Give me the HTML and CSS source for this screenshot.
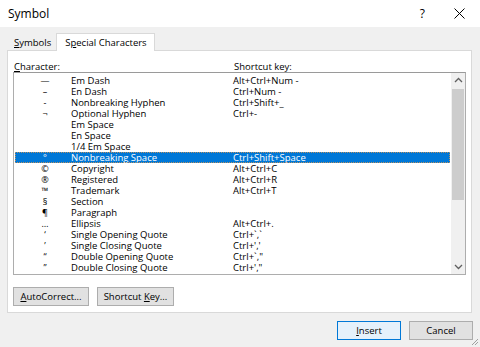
FILE: index.html
```html
<!DOCTYPE html>
<html lang="en">
<head>
    <meta charset="UTF-8">
    <title>Symbol</title>
    <link rel="stylesheet" href="styles.css">
</head>
<body>
    <div class="dialog">
        <!-- Pasek tytułu -->
        <header class="titlebar">
            <span class="title">Symbol</span>
            <span class="help">?</span>
            <span class="close">
                <svg width="11" height="11" viewBox="0 0 11 11">
                    <path d="M0.5 0.5 L10.5 10.5 M10.5 0.5 L0.5 10.5" stroke="#000" stroke-width="1" fill="none"/>
                </svg>
            </span>
        </header>

        <!-- Zakładki -->
        <nav class="tabs">
            <span class="tab"><u>S</u>ymbols</span>
            <span class="tab active">S<u>p</u>ecial Characters</span>
        </nav>

        <section class="panel">
            <div class="list-head">
                <span class="head-char"><u>C</u>haracter:</span>
                <span class="head-key">Shortcut key:</span>
            </div>

            <div class="listbox">
                <div class="rows" id="rows"></div>
                <div class="scrollbar">
                    <span class="arrow">
                        <svg width="9" height="6" viewBox="0 0 9 6"><path d="M1 5 L4.5 1.5 L8 5" stroke="#606060" stroke-width="1.3" fill="none"/></svg>
                    </span>
                    <div class="track"><div class="thumb"></div></div>
                    <span class="arrow">
                        <svg width="9" height="6" viewBox="0 0 9 6"><path d="M1 1 L4.5 4.5 L8 1" stroke="#606060" stroke-width="1.3" fill="none"/></svg>
                    </span>
                </div>
            </div>

            <div class="panel-buttons">
                <button class="btn btn-autocorrect"><u>A</u>utoCorrect...</button>
                <button class="btn btn-shortcut">Shortcut <u>K</u>ey...</button>
            </div>
        </section>

        <footer class="dialog-buttons">
            <button class="btn btn-main default"><u>I</u>nsert</button>
            <button class="btn btn-main">Cancel</button>
        </footer>

        <svg class="grip" width="8" height="8" viewBox="0 0 8 8">
            <path d="M7 1 L1 7 M7 4 L4 7" stroke="#a0a0a0" stroke-width="1" fill="none"/>
        </svg>
    </div>

    <script>
        // Lista znaków specjalnych
        const specialChars = [
            ['\u2014', 'Em Dash', 'Alt+Ctrl+Num -'],
            ['\u2013', 'En Dash', 'Ctrl+Num -'],
            ['-', 'Nonbreaking Hyphen', 'Ctrl+Shift+_'],
            ['\u00ac', 'Optional Hyphen', 'Ctrl+-'],
            ['', 'Em Space', ''],
            ['', 'En Space', ''],
            ['', '1/4 Em Space', ''],
            ['\u00b0', 'Nonbreaking Space', 'Ctrl+Shift+Space'],
            ['\u00a9', 'Copyright', 'Alt+Ctrl+C'],
            ['\u00ae', 'Registered', 'Alt+Ctrl+R'],
            ['\u2122', 'Trademark', 'Alt+Ctrl+T'],
            ['\u00a7', 'Section', ''],
            ['\u00b6', 'Paragraph', ''],
            ['\u2026', 'Ellipsis', 'Alt+Ctrl+.'],
            ['\u2018', 'Single Opening Quote', 'Ctrl+`,`'],
            ['\u2019', 'Single Closing Quote', "Ctrl+','"],
            ['\u201c', 'Double Opening Quote', 'Ctrl+`,"'],
            ['\u201d', 'Double Closing Quote', "Ctrl+',\""]
        ];

        const rows = document.getElementById('rows');
        specialChars.forEach((item, i) => {
            const row = document.createElement('div');
            row.className = 'row' + (i === 7 ? ' selected' : '');

            const ch = document.createElement('span');
            ch.className = 'col-char';
            ch.textContent = item[0];

            const name = document.createElement('span');
            name.className = 'col-name';
            name.textContent = item[1];

            const key = document.createElement('span');
            key.className = 'col-key';
            key.textContent = item[2];

            row.appendChild(ch);
            row.appendChild(name);
            row.appendChild(key);
            rows.appendChild(row);
        });
    </script>
</body>
</html>
```

FILE: styles.css
```css
body {
    margin: 0;
    padding: 0;
    background-color: #f0f0f0;
    font-family: "Open Sans", "Noto Sans", sans-serif;
    font-size: 9.5px;
    color: #000;
}

.dialog {
    width: 480px;
    height: 347px;
    display: flex;
    flex-direction: column;
    position: relative;
    overflow: hidden;
}

.titlebar {
    height: 27px;
    background-color: #fff;
    display: flex;
    align-items: center;
    padding-left: 8px;
    box-sizing: border-box;
}

.title {
    font-size: 12px;
    flex: 1;
}

.help {
    font-size: 12px;
    margin-right: 29px;
}

.close {
    display: flex;
    margin-right: 15px;
}

.tabs {
    display: flex;
    align-items: flex-end;
    margin: 6px 0 0 7px;
    height: 17px;
}

.tab {
    height: 15px;
    line-height: 15px;
    padding: 0 5px 0 7px;
    box-sizing: border-box;
}

.tab.active {
    height: 18px;
    line-height: 18px;
    padding: 0 7px 0 8px;
    background-color: #fff;
    border: 1px solid #d9d9d9;
    border-bottom: none;
    margin-bottom: -1px;
    position: relative;
}

.panel {
    margin: 0 8px 0 7px;
    height: 263px;
    box-sizing: border-box;
    background-color: #fff;
    border: 1px solid #d9d9d9;
    padding: 0 5px;
    display: flex;
    flex-direction: column;
}

.list-head {
    display: flex;
    height: 21px;
    line-height: 11px;
    padding-top: 10px;
    box-sizing: border-box;
}

.head-char {
    width: 220px;
    padding-left: 1px;
}

.listbox {
    height: 203px;
    box-sizing: border-box;
    border: 1px solid #adadad;
    border-top-color: #9a9a9a;
    display: flex;
}

.rows {
    flex: 1;
    padding: 2px 1px 0 1px;
}

.row {
    display: flex;
    height: 11px;
    line-height: 11px;
    white-space: nowrap;
    box-sizing: border-box;
}

.row.selected {
    background-color: #0078d7;
    color: #fff;
    outline: 1px dotted #b89060;
    outline-offset: -1px;
}

.col-char {
    width: 52px;
    padding-left: 4px;
    text-align: center;
    font-size: 9px;
}

.col-name {
    width: 162px;
}

.scrollbar {
    width: 14px;
    background-color: #f0f0f0;
    display: flex;
    flex-direction: column;
}

.arrow {
    height: 14px;
    display: flex;
    align-items: center;
    justify-content: center;
}

.track {
    flex: 1;
    padding: 2px 1px 0 1px;
}

.thumb {
    height: 111px;
    background-color: #cdcdcd;
}

.panel-buttons {
    display: flex;
    gap: 8px;
    margin-top: 12px;
}

.btn {
    font-family: inherit;
    font-size: 9.5px;
    height: 19px;
    padding: 0;
    background-color: #e1e1e1;
    border: 1px solid #adadad;
    color: #000;
    box-sizing: border-box;
}

.btn-autocorrect {
    width: 76px;
}

.btn-shortcut {
    width: 77px;
}

.dialog-buttons {
    display: flex;
    justify-content: flex-end;
    gap: 8px;
    margin: 8px 7px 0 0;
}

.btn-main {
    width: 64px;
}

.btn-main.default {
    background-color: #e5f1fb;
    border-color: #0078d7;
}

.grip {
    position: absolute;
    right: 1px;
    bottom: 1px;
}
```
